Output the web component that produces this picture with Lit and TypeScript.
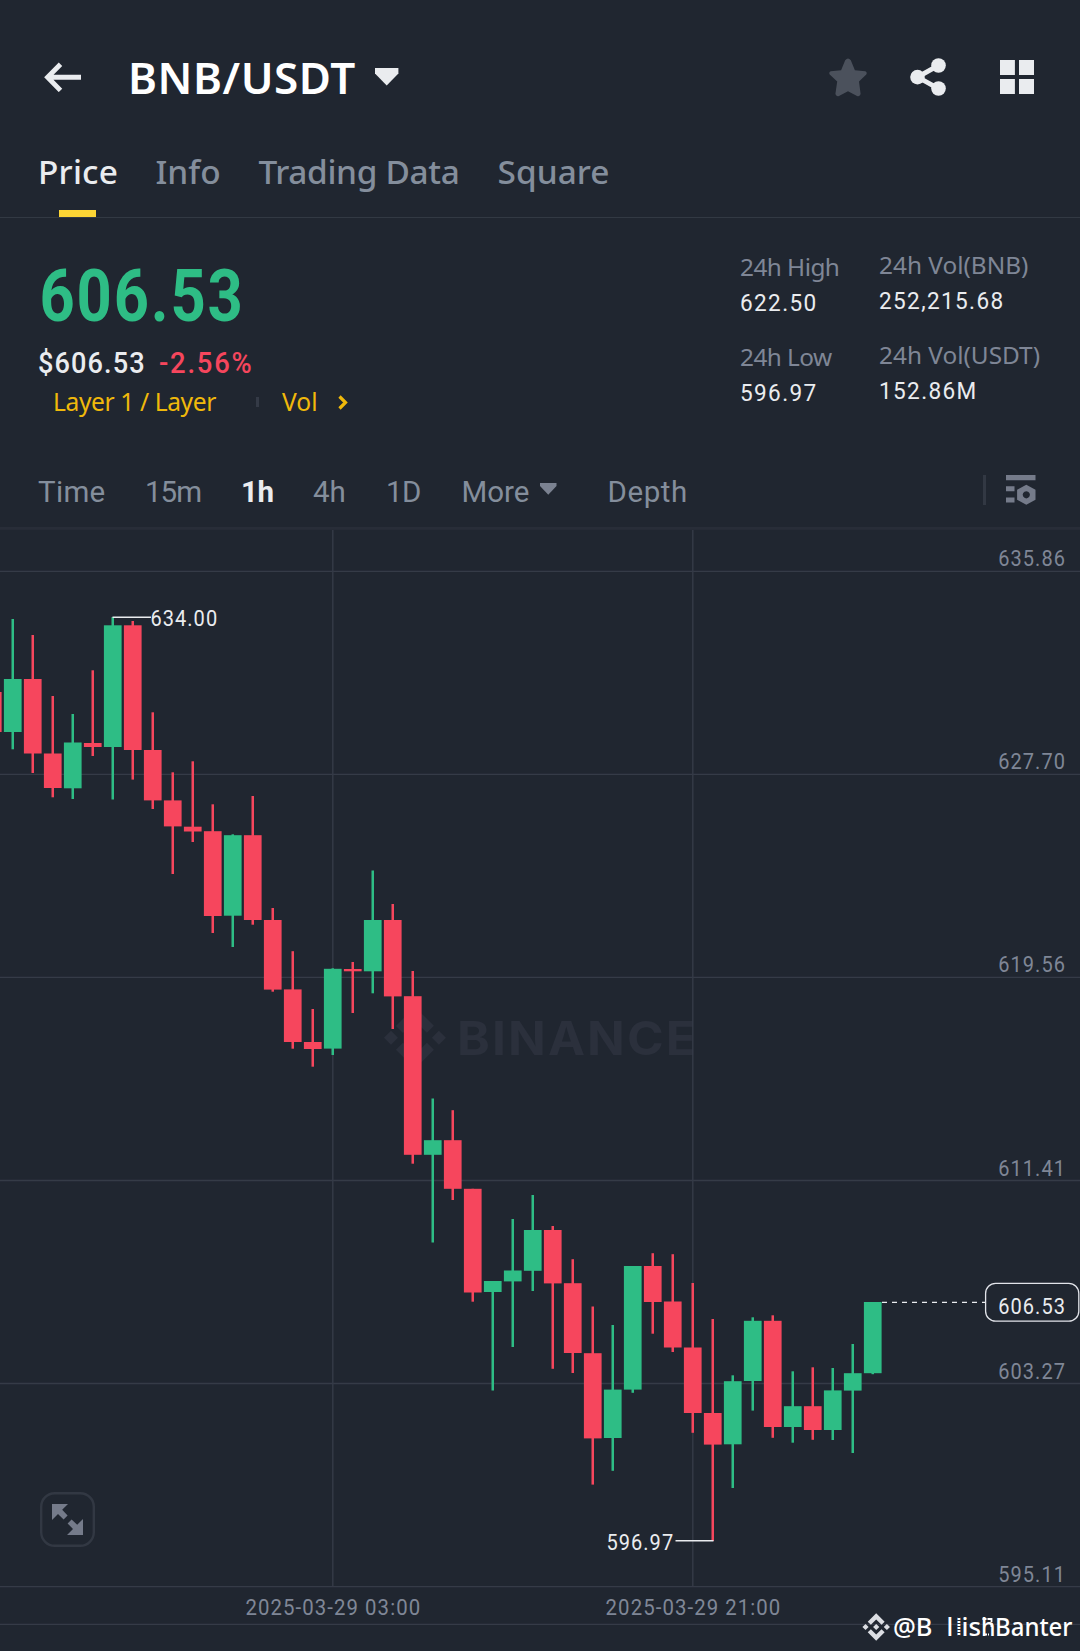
import { LitElement, html, svg, css } from "lit";
import { customElement } from "lit/decorators.js";

const LOGO =
  "M16.624 13.9202l2.7175 2.7154-7.353 7.353-7.353-7.352 2.7175-2.7164 4.6355 4.6595 4.6356-4.6595zm4.6366-4.6366L24 12l-2.7154 2.7164L18.5682 12l2.6924-2.7164zm-9.272.001l2.7163 2.6914-2.7164 2.7174v-.001L9.2721 12l2.7164-2.7154zm-9.2722-.001L5.4088 12l-2.6914 2.6924L0 12l2.7164-2.7164zM11.9885.0115l7.353 7.329-2.7174 2.7154-4.6356-4.6356-4.6355 4.6595-2.7174-2.7154 7.353-7.353z";

// [rising, high, bodyTop, bodyBottom, low] in chart units
type Candle = [boolean, number, number, number, number];
const UP = true;
const DN = false;
const candles: Candle[] = [
  [DN, 692, 692, 732, 732],
  [UP, 619, 679, 732, 749.3],
  [DN, 635, 679, 753.5, 773],
  [DN, 696, 753.5, 788, 797.3],
  [UP, 714, 742.5, 788.3, 799],
  [DN, 670.3, 743, 747, 756],
  [UP, 617, 625.3, 747, 799.5],
  [DN, 621, 625.3, 750, 779.6],
  [DN, 712.3, 750, 800.4, 809],
  [DN, 772.3, 800.4, 826.4, 874],
  [DN, 761.3, 826.7, 831.5, 842],
  [DN, 804.3, 831.2, 916, 933],
  [UP, 834.3, 835.2, 915.7, 947],
  [DN, 796, 835.2, 920, 924.7],
  [DN, 908, 920, 989.6, 991.7],
  [DN, 951.2, 989.4, 1042, 1048.7],
  [DN, 1009, 1042, 1049, 1066.7],
  [UP, 968.3, 968.8, 1048.6, 1055],
  [DN, 962, 969, 971.3, 1013],
  [UP, 870.5, 920, 971.3, 993.3],
  [DN, 904, 920, 996.4, 1029],
  [DN, 971, 996.2, 1154.8, 1163.7],
  [UP, 1098.5, 1140.2, 1154.8, 1242.5],
  [DN, 1110.2, 1140.2, 1188.8, 1200],
  [DN, 1188.8, 1188.8, 1292.5, 1301.7],
  [UP, 1281, 1281, 1292, 1390.5],
  [UP, 1219, 1270.5, 1281.4, 1347],
  [UP, 1195, 1230, 1270.8, 1291],
  [DN, 1226, 1230, 1283.4, 1368.8],
  [DN, 1259.2, 1283.2, 1353, 1373],
  [DN, 1306.5, 1353.2, 1438.4, 1484.6],
  [UP, 1325, 1389.6, 1438, 1470.8],
  [UP, 1266, 1266, 1389.6, 1392.8],
  [DN, 1253.2, 1266, 1302, 1333.7],
  [DN, 1254.2, 1301.5, 1347.5, 1352],
  [DN, 1283, 1347.5, 1413, 1432.8],
  [DN, 1319, 1413, 1444.6, 1541],
  [UP, 1375.3, 1381.2, 1444.3, 1488],
  [UP, 1317.3, 1320.8, 1381, 1410.6],
  [DN, 1315.3, 1320.8, 1427, 1437.8],
  [UP, 1371.3, 1406.2, 1427, 1442.7],
  [DN, 1367.3, 1406.2, 1430, 1439.8],
  [UP, 1368, 1390.4, 1430, 1440],
  [UP, 1344, 1373.2, 1390.6, 1453],
  [UP, 1302, 1302, 1373.2, 1374.2],
];

const levels: [string, number][] = [
  ["635.86", 571.4],
  ["627.70", 774.4],
  ["619.56", 977.4],
  ["611.41", 1180.5],
  ["603.27", 1383.5],
  ["595.11", 1586.6],
];

@customElement("price-chart")
export class PriceChart extends LitElement {
  static styles = css`
    :host { display: block; }
    svg { display: block; }
    .num { font-family: Roboto, "Liberation Sans", sans-serif; font-size: 22.6px; letter-spacing: 1.2px; }
    .dim { fill: #7f8696; }
    .lit { fill: #eaecef; }
    .brand { font-family: Inter, "Liberation Sans", sans-serif; font-weight: 700; font-size: 47px; letter-spacing: 2px; fill: #2b303c; }
    .credit { font-family: "Noto Sans", sans-serif; font-size: 25px; font-weight: 500; fill: #fff; }
    .grid { stroke: #353b47; stroke-width: 1.4; }
  `;

  private label(text: string, x: number, y: number, w: number, cls: string) {
    return svg`<text class="num ${cls}" x=${x} y=${y} textLength=${w} lengthAdjust="spacingAndGlyphs">${text}</text>`;
  }

  private candle([up, high, top, bottom, low]: Candle, i: number) {
    const cx = -7.3 + i * 20;
    return svg`<g fill=${up ? "#2ebd85" : "#f6465d"}>
      <rect x=${cx - 1.2} y=${high} width="2.5" height=${low - high}></rect>
      <rect x=${cx - 8.8} y=${top} width="17.7" height=${bottom - top}></rect>
    </g>`;
  }

  render() {
    return html`<svg width="1080" height="1124" viewBox="0 527 1080 1124">
      <rect x="0" y="527" width="1080" height="2.8" fill="#282d38"></rect>
      <g fill="#2b303c" transform="translate(384 1006.9) scale(2.58)"><path d=${LOGO}></path></g>
      <text class="brand" x="457" y="1054.7" textLength="241" lengthAdjust="spacingAndGlyphs">BINANCE</text>
      ${levels.map(([, y]) => svg`<line class="grid" x1="0" x2="1080" y1=${y} y2=${y}></line>`)}
      <line class="grid" x1="0" x2="1080" y1="1624.4" y2="1624.4"></line>
      <line class="grid" x1="332.8" x2="332.8" y1="530" y2="1586.6"></line>
      <line class="grid" x1="692.8" x2="692.8" y1="530" y2="1586.6"></line>
      ${levels.map(([t, y]) => this.label(t, 998.2, y - 5, 67.8, "dim"))}
      ${this.label("2025-03-29 03:00", 245.4, 1614.8, 175.8, "dim")}
      ${this.label("2025-03-29 21:00", 605.6, 1614.8, 175.8, "dim")}
      ${candles.map((c, i) => this.candle(c, i))}
      <path d="M112.5 617.3H151M675.5 1540.8H713.5" stroke="#eaecef" stroke-width="1.4"></path>
      ${this.label("634.00", 150.4, 626, 67.8, "lit")}
      ${this.label("596.97", 606.4, 1549.7, 67.8, "lit")}
      <path d="M882 1302.3H985" stroke="#eaecef" stroke-width="1.3" stroke-dasharray="5 5"></path>
      <rect x="985.6" y="1283.4" width="93.2" height="37.8" rx="10" fill="#202630" stroke="#e2e4ea" stroke-width="1.3"></rect>
      ${this.label("606.53", 998.2, 1313.8, 67.8, "lit")}
      <rect x="41.2" y="1493.2" width="52.6" height="52.6" rx="13.5" fill="none" stroke="#323843" stroke-width="2.4"></rect>
      <path d="M52 1504h16l-5.8 5.8 5.4 5.6-4 4-5.6-5.4-6 6zM83 1535h-16l6-6-5.4-5.6 4-4 5.6 5.4 5.8-5.8z" fill="#757b8a"></path>
      <g fill="#dcdee3" transform="translate(862.4 1613.2) scale(1.15)"><path d=${LOGO}></path></g>
      <text class="credit" x="893" y="1636" textLength="39.5" lengthAdjust="spacingAndGlyphs">@B</text>
      <text class="credit" x="946.5" y="1636">l</text>
      <text class="credit" x="955.5" y="1636">l</text>
      <text class="credit" x="961.5" y="1636" textLength="19.5" lengthAdjust="spacingAndGlyphs">is</text>
      <text class="credit" x="981" y="1636" textLength="14.5" lengthAdjust="spacingAndGlyphs">h</text>
      <text class="credit" x="995" y="1636" textLength="77.5" lengthAdjust="spacingAndGlyphs">Banter</text>
      <path d="M959 1617V1637" stroke="#202630" stroke-width="3.6" stroke-dasharray="1 2"></path>
      <path d="M982.5 1619H992M983 1634.5H989M991.5 1618V1627" fill="none" stroke="#fff" stroke-width="1.8" stroke-dasharray="4 1"></path>
    </svg>`;
  }
}

@customElement("app-root")
export class AppRoot extends LitElement {
  static styles = css`
    :host { display: block; width: 1080px; height: 1651px; overflow: hidden; background: #202630;
      color: #eaecef; font-family: "Noto Sans", sans-serif; }
    svg { display: block; }
    .header { display: flex; align-items: center; height: 154px; box-sizing: border-box; padding: 0 46px 0 44px; }
    .title { margin-left: 46px; width: 246.5px; font-size: 44px; font-weight: 600; line-height: 50px; color: #fff; white-space: nowrap; letter-spacing: 0.55px; }
    .star { margin-left: auto; }
    .share { margin-left: 43.5px; }
    .apps { margin-left: 53px; }
    .tabs { display: flex; height: 63px; padding-left: 38px; border-bottom: 1px solid #323943; font-size: 33.4px; font-weight: 550; color: #848e9c; }
    .tab { display: flex; flex-direction: column; justify-content: space-between; line-height: 35px; white-space: nowrap; letter-spacing: 0.05px; }
    .tab.on { color: #eaecef; letter-spacing: 0.2px; }
    .t0 { width: 117.5px; }
    .t1 { width: 103px; }
    .t2 { width: 239px; letter-spacing: -0.35px; }
    .mark { width: 37px; height: 7.5px; margin-left: 21px; background: #fcd535; }
    .summary { display: flex; justify-content: space-between; height: 239px; box-sizing: border-box; padding: 0 37px 0 38px; }
    .left { padding-top: 39px; }
    .price, .usd span, .chg, .v { transform-origin: 0 50%; }
    .price { font: 700 71.5px/80px Roboto, sans-serif; color: #2ebd85; letter-spacing: 2.1px; width: 240px; transform: translateX(1.5px) scaleX(0.86); }
    .row { display: flex; font: 500 29.5px/52px Roboto, sans-serif; }
    .usd { width: 121px; }
    .usd span { display: block; letter-spacing: 1.2px; transform: scaleX(0.92); }
    .chg { color: #f6465d; letter-spacing: 1.9px; transform: scaleX(0.93); }
    .tags { display: flex; align-items: center; padding-left: 15px; font-size: 24.6px; line-height: 26px; color: #f0b90b; }
    .layer { width: 202.5px; white-space: nowrap; letter-spacing: -0.4px; }
    .bar { width: 3px; height: 10px; background: #343a46; margin-right: 23.5px; }
    .vol { width: 55.5px; }
    .stats { display: flex; }
    .col { display: flex; flex-direction: column; gap: 18px; padding-top: 30.5px; width: 139px; white-space: nowrap; letter-spacing: -0.55px; }
    .col2 { padding-top: 28.5px; width: 164px; letter-spacing: 0; }
    .k { font-size: 24.4px; line-height: 36px; color: #7f8696; }
    .v { font: 400 24.8px/36px Roboto, sans-serif; color: #eaecef; letter-spacing: 1.5px; transform: scaleX(0.91); }
    .frames { display: flex; align-items: center; height: 70px; padding: 0 44px 0 38px; font: 400 29.5px/34px Roboto, sans-serif; color: #848e9c; }
    .f0 { width: 107px; letter-spacing: 0.3px; }
    .f1 { width: 96px; letter-spacing: -1px; }
    .f2 { width: 72px; font-weight: 700; color: #eaecef; letter-spacing: -0.5px; }
    .f3 { width: 73px; }
    .f4 { width: 75.5px; letter-spacing: -0.5px; }
    .f5 { width: 78.5px; }
    .f6 { margin-left: 50.5px; letter-spacing: 0.6px; }
    .caret { margin-top: -7px; }
    .sep { width: 3px; height: 30px; margin-left: auto; margin-right: 20px; background: #323843; margin-top: -4px; }
    .opts { margin-top: -4px; }
  `;

  render() {
    return html`
      <div class="header">
        <svg width="38" height="30" viewBox="0 0 38 30"><path d="M37 15.2H4M16.5 2.2L3.6 15.2 16.5 28.4" fill="none" stroke="#eaecef" stroke-width="4.9"></path></svg>
        <div class="title">BNB/USDT</div>
        <svg width="24" height="18" viewBox="0 0 24 18"><path d="M0 0h23.4v5.4L11.7 17.6 0 5.4z" fill="#eaecef"></path></svg>
        <svg class="star" width="38" height="39" viewBox="0 0 38 39"><path d="M16.2 2.3q2.8-3.6 5.6 0L25.9 12.3l10.4.9q2.2 1 1 3.3L30 23.5l1.6 12.6q-.8 3-3.6 1.8L19 33.3l-9 4.6q-2.8 1-3.6-1.8L8.2 23.5.7 16.5q-1.2-2.3 1-3.3l10.4-.9z" fill="#4b515c"></path></svg>
        <svg class="share" width="37" height="38" viewBox="0 0 37 38"><path d="M28.5 7.4L7.6 19.1l20.9 11.6" fill="none" stroke="#eaecef" stroke-width="4.8"></path><circle cx="7.5" cy="19.1" r="7.3" fill="#eaecef"></circle><circle cx="28.5" cy="7.5" r="7.3" fill="#eaecef"></circle><circle cx="28.5" cy="30.5" r="7.3" fill="#eaecef"></circle></svg>
        <svg class="apps" width="34" height="34" viewBox="0 0 34 34"><path d="M0 0h14.9v15H0zM19 0h15v15H19zM0 19h14.9v14.9H0zM19 19h15v14.9H19z" fill="#eaecef"></path></svg>
      </div>
      <div class="tabs">
        <div class="tab on t0"><span>Price</span><div class="mark"></div></div>
        <div class="tab t1">Info</div>
        <div class="tab t2">Trading Data</div>
        <div class="tab">Square</div>
      </div>
      <div class="summary">
        <div class="left">
          <div class="price">606.53</div>
          <div class="row"><div class="usd"><span>$606.53</span></div><div class="chg">-2.56%</div></div>
          <div class="tags">
            <div class="layer">Layer 1 / Layer</div>
            <div class="bar"></div>
            <div class="vol">Vol</div>
            <svg width="10" height="15" viewBox="0 0 10 15"><path d="M1.5 1.5l6 6-6 6" fill="none" stroke="#f0b90b" stroke-width="3.2"></path></svg>
          </div>
        </div>
        <div class="stats">
          <div class="col">
            <div><div class="k">24h High</div><div class="v">622.50</div></div>
            <div><div class="k">24h Low</div><div class="v">596.97</div></div>
          </div>
          <div class="col col2">
            <div><div class="k">24h Vol(BNB)</div><div class="v">252,215.68</div></div>
            <div><div class="k">24h Vol(USDT)</div><div class="v">152.86M</div></div>
          </div>
        </div>
      </div>
      <div class="frames">
        <div class="f0">Time</div>
        <div class="f1">15m</div>
        <div class="f2">1h</div>
        <div class="f3">4h</div>
        <div class="f4">1D</div>
        <div class="f5">More</div>
        <svg class="caret" width="17" height="12" viewBox="0 0 17 12"><path d="M0 0h16.5v3L8.25 11.8 0 3z" fill="#7b8291"></path></svg>
        <div class="f6">Depth</div>
        <div class="sep"></div>
        <svg class="opts" width="30" height="30" viewBox="0 0 30 30"><path d="M0 0h29.5v5.2H0zM0 11.3h8.5v5H0zM0 22.5h8.5v5H0z" fill="#757b8a"></path><path fill-rule="evenodd" d="M20.3 9.8l9.2 4.9v10l-9.2 5-9.2-5v-10zM20.3 16.2a3.6 3.6 0 1 0 .01 0z" fill="#757b8a"></path></svg>
      </div>
      <price-chart></price-chart>
    `;
  }
}
